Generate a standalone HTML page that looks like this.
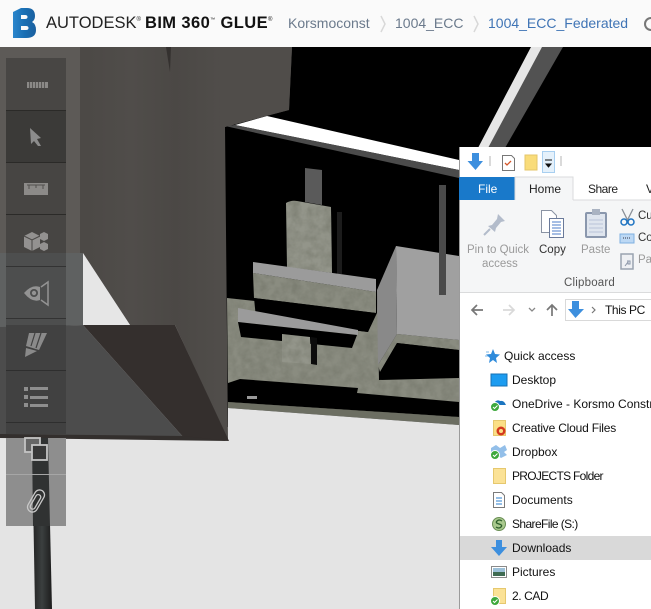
<!DOCTYPE html>
<html><head><meta charset="utf-8"><style>
html,body{margin:0;padding:0;background:#e4e4e4}
#r{position:relative;width:651px;height:609px;overflow:hidden;font-family:"Liberation Sans",sans-serif}
#r svg{position:absolute;left:0;top:0}
.t{position:absolute;white-space:nowrap;line-height:14px}
.n{font-size:12px;color:#111;left:512px}
</style></head><body><div id="r">
<svg width="651" height="609" viewBox="0 0 651 609">
<defs>
<filter id="c" x="0" y="0" width="100%" height="100%" color-interpolation-filters="sRGB"><feTurbulence type="fractalNoise" baseFrequency="0.12" numOctaves="3" seed="4"/><feColorMatrix values="0 0 0 0 .4  0 0 0 0 .41  0 0 0 0 .36  .5 .5 0 0 -.36"/><feComposite in2="SourceGraphic" operator="in"/><feMerge><feMergeNode in="SourceGraphic"/><feMergeNode/></feMerge></filter>
<linearGradient id="w" x1="0" x2="1" y1="0" y2="0"><stop offset="0" stop-color="#4e4b48"/><stop offset=".3" stop-color="#4c4946"/><stop offset=".45" stop-color="#504d4a"/><stop offset=".6" stop-color="#4b4845"/><stop offset=".75" stop-color="#504d4a"/><stop offset="1" stop-color="#4d4a47"/></linearGradient>
<linearGradient id="p" x1="0" x2="1" y1="0" y2="0"><stop offset="0" stop-color="#222"/><stop offset=".5" stop-color="#3b3f3f"/><stop offset="1" stop-color="#1c1c1c"/></linearGradient>
<linearGradient id="lb" x1="0" x2="1" y1="0" y2="0"><stop offset="0" stop-color="#2b86cc"/><stop offset=".5" stop-color="#1a6fb4"/><stop offset="1" stop-color="#1a5f9e"/></linearGradient>
</defs>
<!-- scene -->
<rect x="0" y="47" width="651" height="562" fill="#e4e4e4"/>
<rect x="225" y="47" width="426" height="380" fill="#000"/>
<polygon points="225,127 459,178 459,430 228,408" fill="#000"/>
<polygon points="531,47 563,47 505,148 478,148" fill="#525252"/>
<polygon points="531,47 542,47 488,148 478,148" fill="#e6e6e6"/>
<!-- light band -->
<polygon points="235,125 267,116 459,160 459,170" fill="#fff"/>
<polygon points="225,126 235,125 459,170 459,178" fill="#4b4b4b"/>
<!-- concrete base -->
<polygon filter="url(#c)" points="227,298 255,301 256,318 368,332 377,313 377,290 379,380 459,378 459,417 228,402 228,383" fill="#8a8c80"/>
<polygon filter="url(#c)" points="397,334 459,340 459,350 397,343 380,372 378,365" fill="#8a8c80"/>
<polygon points="228,383 240,379 358,388 357,393 459,402 459,417 228,402" fill="#000"/>
<polygon points="228,402 459,417 459,425 228,408" fill="#6c6e62"/>
<polygon points="228,408 459,425 459,432 228,432" fill="#e4e4e4"/>
<!-- column -->
<polygon points="305,168 322,170 322,205 305,202" fill="#5a5a5a"/>
<path filter="url(#c)" d="M286 203Q291 200 297 201L331 207 332 273 287 267Z" fill="#93958a"/>
<rect x="337" y="212" width="5" height="62" fill="#1c1c1c"/>
<polygon points="253,262 376,279 376,292 253,273" fill="#9b9b9b"/>
<polygon filter="url(#c)" points="253,273 376,292 376,313 254,298" fill="#8a8c80"/>
<polygon points="254,298 376,313 368,332 256,318" fill="#000"/>
<polygon points="238,308 358,330 358,335 238,322" fill="#9b9b9b"/>
<polygon points="238,322 357,335 352,348 241,337" fill="#000"/>
<polygon filter="url(#c)" points="282,334 310,337 311,364 282,362" fill="#93958a"/>
<polygon points="311,337 317,338 317,365 311,364" fill="#0c0c0c"/>
<!-- box -->
<polygon points="396,246 397,334 378,365 377,290" fill="#898989"/>
<polygon points="396,246 459,256 459,340 397,334" fill="#a0a0a0"/>
<polygon points="397,343 459,350 459,378 380,372" fill="#000"/>
<rect x="439" y="185" width="7" height="110" fill="#4a4a4a"/>
<rect x="247" y="396" width="10" height="3" fill="#999"/>
<!-- wall -->
<polygon points="0,47 292,47 289,110 225,127 228,440 175,325 130,325 82,253 0,253" fill="url(#w)"/>
<polygon points="218,47 292,47 289,110 225,127 220,128" fill="#504d4a"/>
<polygon points="166,47 171,47 170,72" fill="#34312f"/>
<polygon points="0,253 83,253 83,325 0,328" fill="#5f6161"/>
<polygon points="83,253 130,325 83,325" fill="#e6e6e6"/>
<polygon points="0,327 83,325 184,438 0,435" fill="#4c4c4c"/>
<polygon points="83,325 175,325 229,441 184,438" fill="#342f2d"/>
<polygon points="0,434 184,436 229,441 0,438" fill="#332f2d"/>
<!-- left frame -->
<rect x="0" y="47" width="80" height="206" fill="#5d5a57"/>
<rect x="6" y="58" width="60" height="52" fill="#484644"/>
<rect x="6" y="110" width="60" height="1" fill="#2b2a28"/>
<rect x="6" y="111" width="60" height="51" fill="#3b3a38"/>
<rect x="6" y="162" width="60" height="52" fill="#474543"/>
<rect x="6" y="162" width="60" height="1" fill="#2b2a28"/>
<rect x="6" y="214" width="60" height="39" fill="#474543"/>
<rect x="6" y="214" width="60" height="1" fill="#2b2a28"/>
<rect x="6" y="253" width="60" height="72" fill="#4d4e4e"/>
<rect x="6" y="266" width="60" height="1" fill="#333"/>
<rect x="6" y="318" width="60" height="1" fill="#333"/>
<rect x="6" y="325" width="60" height="109" fill="#414141"/>
<rect x="6" y="370" width="60" height="1" fill="#2e2e2e"/>
<rect x="6" y="422" width="60" height="1" fill="#2e2e2e"/>
<!-- pipe -->
<polygon points="32,438 48,438 52,609 35,609" fill="url(#p)"/>
<rect x="6" y="438" width="60" height="88" fill="#8e8e8e"/>
<polygon points="32,438 48,438 50,526 33,526" fill="#303232"/>
<rect x="6" y="474" width="60" height="1" fill="#a6a6a6"/>
<!-- toolbar icons -->
<g fill="#9a9a9a">
<rect x="27" y="82" width="21" height="6" fill="#8b8987"/>
<g fill="#5a5856"><rect x="29" y="82" width="1" height="6"/><rect x="32" y="82" width="1" height="6"/><rect x="35" y="82" width="1" height="6"/><rect x="38" y="82" width="1" height="6"/><rect x="41" y="82" width="1" height="6"/><rect x="44" y="82" width="1" height="6"/></g>
<path d="M30 128 L41 138 L37 139 L41 146 L38 146 L34 141 L31 144Z" fill="#8c8c8c"/>
<rect x="24" y="183" width="24" height="12" fill="#8c8a88"/>
<path d="M27 185h18M29 185v4M36 185v3M43 185v4" stroke="#52504e" stroke-width="1" fill="none"/>
<path d="M24 236l8-4 8 4v11l-8 4-8-4z" fill="#939190"/><path d="M24 236l8 4 8-4M32 240v11" stroke="#4a4846" fill="none"/>
<path d="M44 232l4 2v5l-4 2-4-2v-5z M44 242l4 2v5l-4 2-4-2v-5z" fill="#939190"/>
<path d="M24 293q8-9 16-6v13q-8 3-16-7z" fill="#939393"/><circle cx="34" cy="293" r="4" fill="#4d4e4e"/><circle cx="34" cy="293" r="2.200" fill="#939393"/><path d="M41 287l7-5v23l-7-5" stroke="#939393" stroke-width="1.500" fill="none"/>
<path d="M29 333H47L39 350 26 346Z" fill="#8a8a8a"/><path d="M26 348l11 3-12 6z" fill="#8a8a8a"/><path d="M35 333l-4 13M41 333l-5 15" stroke="#414141" stroke-width="1.200"/>
<path d="M24 387h4v4h-4zM24 395h4v4h-4zM24 403h4v4h-4zM30 387h18v3H30zM30 396h18v3H30zM30 404h18v3H30z" fill="#8e8e8e"/>
<rect x="25" y="438" width="15" height="14" fill="#666" stroke="#c4c4c4" stroke-width="1.800"/><rect x="32" y="445" width="15" height="15" fill="#383838" stroke="#c4c4c4" stroke-width="1.800"/>
<g fill="none" stroke="#c8c8c8" stroke-width="1.300" transform="translate(36 501) rotate(30)"><rect x="-5" y="-12" width="10" height="24" rx="5"/><rect x="-2.500" y="-7" width="5" height="16" rx="2.500"/></g>
</g>
<!-- header -->
<rect x="0" y="0" width="651" height="47" fill="#fafafa"/>
<path fill-rule="evenodd" d="M13 12 L21 8 H27 Q35 8 35 16 Q35 20 32 22 Q36 24 36 30 Q36 38 26 38 L13 38Z M21 15v4h4q2.500 0 2.500-2t-2.500-2z M21 26v4h5q2.500 0 2.500-2t-2.500-2z" fill="url(#lb)"/>
<path d="M381 16l4 8-4 8" fill="none" stroke="#d8d8d8" stroke-width="1.500"/>
<path d="M474 16l4 8-4 8" fill="none" stroke="#d8d8d8" stroke-width="1.500"/>
<path d="M651 18a6 6 0 0 0-6 6 6 6 0 0 0 6 6" fill="none" stroke="#777" stroke-width="2"/>
<!-- explorer -->
<rect x="459" y="147" width="192" height="462" fill="#fff"/>
<rect x="459" y="147" width="1" height="462" fill="#9b9b9b"/>
<rect x="460" y="200" width="191" height="92" fill="#f5f6f7"/>
<rect x="460" y="292" width="191" height="1" fill="#dadbdc"/>
<rect x="459" y="177" width="56" height="23" fill="#1979ca"/>
<path d="M515 200v-23h58v23" fill="#f5f6f7" stroke="#dadbdc"/>
<path d="M573 200h78" stroke="#dadbdc"/>
<!-- qat -->
<path d="M472 153h7v8h4l-7.500 9-8-9h4.500z" fill="#3d8fde"/>
<path d="M490 156v10M561 156v10" stroke="#b5b5b5"/>
<path d="M502.500 155.500h9l3 3v12h-12z" fill="#fff" stroke="#777"/><path d="M505 163l2 2 4-4" fill="none" stroke="#d4562a" stroke-width="1.300"/>
<rect x="525" y="155" width="12" height="15" fill="#f9dc7a" stroke="#e4c66a"/>
<rect x="542.500" y="151.500" width="12" height="21" fill="#e5f1fb" stroke="#a8cff0"/>
<path d="M545 160h7M546 164h5l-2.500 3z" stroke="#111" fill="#111"/>
<!-- ribbon icons -->
<path d="M498 214l7 7-4 1-5 6-1 4-7-6 4-1 5-6z" fill="#b3bccb"/><path d="M490 229l-6 6" stroke="#b3bccb" stroke-width="2"/>
<path d="M541.500 210.500h10l5 5v17h-15z" fill="#fff" stroke="#8a93a3"/><path d="M549.500 218.500h14v19h-14z" fill="#fff" stroke="#6a7a9a"/><path d="M552 222h9M552 225h9M552 228h9M552 231h9M552 234h9" stroke="#4e7cc8"/>
<rect x="586" y="213" width="20" height="24" rx="1" fill="#dfe5ee" stroke="#8a97ad" stroke-width="2"/><rect x="592" y="209" width="8" height="6" fill="#aab3c2"/><path d="M589 220h14M589 224h14M589 228h14M589 232h14" stroke="#b9c4d8"/>
<path d="M622 209l6 12M633 209l-6 12" stroke="#8a8f97" stroke-width="1.300"/><circle cx="624" cy="222" r="3" fill="none" stroke="#1f74c2" stroke-width="1.500"/><circle cx="631" cy="222" r="3" fill="none" stroke="#1f74c2" stroke-width="1.500"/>
<rect x="620" y="234" width="14" height="9" fill="#bcd8f4" stroke="#7eb0e0"/><path d="M623 238h8" stroke="#334" stroke-dasharray="1 1"/>
<rect x="621" y="254" width="12" height="15" fill="#eef0f3" stroke="#9aa3b0" stroke-width="1.500"/><path d="M625 266l3-4v2h2v-3h-3" stroke="#8b96a8" fill="none"/>
<!-- nav -->
<path d="M483 310h-10M477 305l-5 5 5 5" fill="none" stroke="#777" stroke-width="1.700"/>
<path d="M513 310h-10M509 305l5 5-5 5" fill="none" stroke="#d9d9d9" stroke-width="1.700"/>
<path d="M529 308l3 3 3-3" fill="none" stroke="#888" stroke-width="1.300"/>
<path d="M552 316v-11M547 310l5-5 5 5" fill="none" stroke="#777" stroke-width="1.700"/>
<rect x="565.500" y="299.500" width="90" height="21" fill="#fff" stroke="#d9d9d9"/>
<path d="M572 302h7v8h5l-8.500 9-7.500-9h4z" fill="#3d8fde" transform="translate(0 -1)"/>
<path d="M592 307l3 3-3 3" fill="none" stroke="#777" stroke-width="1.200"/>
<!-- tree -->
<rect x="460" y="536" width="191" height="24" fill="#d9d9d9"/>
<path d="M493 349l2 5 5 .5-4 3.500 1 5-4-3-4 3 1-5-4-3.500 5-.5z" fill="#2f8bdb"/><path d="M486 352h3M485 356h3" stroke="#7db8e8"/>
<rect x="491" y="374" width="16" height="12" fill="#1c9cf0" stroke="#1671b5"/>
<path d="M494 403q3-4 6-2q4-1 6 4h-12z" fill="#1c75c0"/><circle cx="495" cy="407" r="4.500" fill="#3da83c" stroke="#fff"/><path d="M493 407l1.500 1.500 3-3" stroke="#fff" fill="none"/>
<rect x="493.500" y="420.500" width="12" height="15" fill="#fbdf86" stroke="#e6c86e"/><circle cx="501" cy="431" r="4.500" fill="#d4391e"/><circle cx="501" cy="431" r="2" fill="#fbdf86"/>
<path d="M491 448l5-3 4 3 5-3 2 5-3 2 3 3-6 3-4-3-4 3-2-6z" fill="#93bfe9"/><circle cx="495" cy="455" r="4.500" fill="#3da83c" stroke="#fff"/><path d="M493 455l1.500 1.500 3-3" stroke="#fff" fill="none"/>
<rect x="493.500" y="468.500" width="12" height="15" fill="#fbe296" stroke="#e6c86e"/>
<path d="M493.500 492.500h8l3 3v12h-11z" fill="#fff" stroke="#7b7b7b"/><path d="M496 498h6M496 501h6M496 504h6" stroke="#2b7fce"/>
<circle cx="499" cy="524" r="6.500" fill="#a9c98d" stroke="#6a8f55"/><path d="M502 521q-3-2-5 0t2 3 2 3-5 0" fill="none" stroke="#2d5f2a" stroke-width="1.300"/>
<path d="M496 540h6v7h5l-8 9-8-9h5z" fill="#3d8fde"/>
<rect x="491.500" y="566.500" width="15" height="11" fill="#fff" stroke="#8a8a8a"/><rect x="493" y="568" width="12" height="8" fill="#9cc0d8"/><rect x="493" y="572" width="12" height="4" fill="#3f6b52"/>
<rect x="493.500" y="588.500" width="12" height="15" fill="#fbe296" stroke="#e6c86e"/><circle cx="495" cy="601" r="4.500" fill="#3da83c" stroke="#fff"/><path d="M493 601l1.500 1.500 3-3" stroke="#fff" fill="none"/>
</svg>
<!-- header text -->
<div class="t" style="left:46px;top:16px;font-size:16.500px;color:#222">AUTODESK<sup style="font-size:6px;line-height:0;vertical-align:7px">®</sup></div>
<div class="t" style="left:145px;top:16px;font-size:16.500px;font-weight:bold;color:#111;letter-spacing:.4px">BIM 360<sup style="font-size:5px;line-height:0;vertical-align:7px;font-weight:normal">™</sup> GLUE<sup style="font-size:6px;line-height:0;vertical-align:7px;font-weight:normal">®</sup></div>
<div class="t" style="left:288px;top:16px;font-size:14px;color:#6b7a8c">Korsmoconst</div>
<div class="t" style="left:395px;top:16px;font-size:14px;color:#6b7a8c">1004_ECC</div>
<div class="t" style="left:488px;top:16px;font-size:14px;color:#3f74b5">1004_ECC_Federated</div>
<!-- ribbon text -->
<div class="t" style="left:478px;top:182px;font-size:12px;color:#fff">File</div>
<div class="t" style="left:529px;top:182px;font-size:12px;color:#222">Home</div>
<div class="t" style="left:588px;top:182px;font-size:12px;color:#222;letter-spacing:-.5px">Share</div>
<div class="t" style="left:646px;top:182px;font-size:12px;color:#222">V</div>
<div class="t" style="left:467px;top:243px;font-size:11.500px;color:#9a9a9a">Pin to Quick</div>
<div class="t" style="left:482px;top:257px;font-size:11.500px;color:#9a9a9a">access</div>
<div class="t" style="left:539px;top:243px;font-size:11.500px;color:#333">Copy</div>
<div class="t" style="left:581px;top:243px;font-size:11.500px;color:#9a9a9a">Paste</div>
<div class="t" style="left:638px;top:209px;font-size:11.500px;color:#333">Cut</div>
<div class="t" style="left:638px;top:231px;font-size:11.500px;color:#333">Co</div>
<div class="t" style="left:638px;top:253px;font-size:11.500px;color:#9a9a9a">Pa</div>
<div class="t" style="left:564px;top:276px;font-size:11.500px;color:#555;letter-spacing:.2px">Clipboard</div>
<div class="t" style="left:605px;top:303px;font-size:12px;color:#111;letter-spacing:-.4px">This PC</div>
<!-- tree text -->
<div class="t n" style="left:504px;top:349px">Quick access</div>
<div class="t n" style="top:373px">Desktop</div>
<div class="t n" style="top:397px">OneDrive - Korsmo Constr</div>
<div class="t n" style="top:421px;letter-spacing:-.2px">Creative Cloud Files</div>
<div class="t n" style="top:445px">Dropbox</div>
<div class="t n" style="top:469px;letter-spacing:-.7px">PROJECTS Folder</div>
<div class="t n" style="top:493px">Documents</div>
<div class="t n" style="top:517px;letter-spacing:-.6px">ShareFile (S:)</div>
<div class="t n" style="top:541px">Downloads</div>
<div class="t n" style="top:565px">Pictures</div>
<div class="t n" style="top:589px;letter-spacing:-.4px">2. CAD</div>
</div></body></html>
